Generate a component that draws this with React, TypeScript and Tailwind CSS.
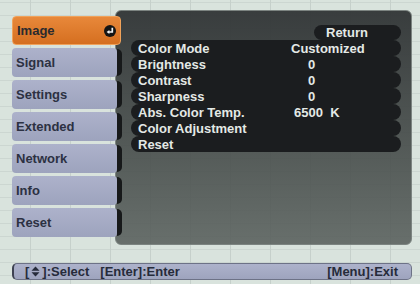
import React from 'react';

const menuItems = ['Signal', 'Settings', 'Extended', 'Network', 'Info', 'Reset'];

const rows = [
  { label: 'Color Mode', value: 'Customized', pad: 'pl-0' },
  { label: 'Brightness', value: '0', pad: 'pl-[17px]' },
  { label: 'Contrast', value: '0', pad: 'pl-[17px]' },
  { label: 'Sharpness', value: '0', pad: 'pl-[17px]' },
  { label: 'Abs. Color Temp.', value: '6500\u00a0\u00a0K', pad: 'pl-[3px]' },
  { label: 'Color Adjustment', value: '', pad: 'pl-0' },
  { label: 'Reset', value: '', pad: 'pl-0' },
];

const EnterIcon = () => (
  <svg width="12" height="12" viewBox="0 0 12 12">
    <circle cx="6" cy="6" r="6" fill="#141414" />
    <path d="M8.3 2.8 V7 H5" stroke="#f2f2f2" strokeWidth="1.7" fill="none" />
    <path d="M2.6 7 L5.4 4.9 L5.4 9.1 Z" fill="#f2f2f2" />
  </svg>
);

const UpDownIcon = () => (
  <svg width="9" height="11" viewBox="0 0 9 11">
    <path d="M4.5 0.5 L8.5 4.8 H0.5 Z" fill="#262b3a" />
    <path d="M4.5 10.5 L8.5 6.2 H0.5 Z" fill="#262b3a" />
  </svg>
);

export default function App() {
  return (
    <div
      className="w-[420px] h-[284px] overflow-hidden bg-[#d9e3dd] bg-[linear-gradient(to_right,#c6d0cb_1px,transparent_1px),linear-gradient(to_bottom,#ccd6d1_1px,transparent_1px)] bg-[size:40px_13px] bg-[position:30px_2px] text-[13px] font-bold leading-none"
      style={{ fontFamily: '"Liberation Sans", Arial, sans-serif' }}
    >
      <div className="flex pl-[12px] pt-[10px]">
        {/* left tabs */}
        <div className="relative z-10 w-[110px] mt-[6px] flex flex-col gap-[3px]">
          <div className="h-[29px] w-[109px] rounded-[4px] border border-[#f0a25a] bg-[linear-gradient(to_bottom,#e8883a,#d56f20)] flex items-center justify-between pl-[4px] pr-[4px] text-[#2a2a2e]">
            <span>Image</span>
            <EnterIcon />
          </div>
          {menuItems.map((m) => (
            <div key={m} className="flex items-center">
              <div className="h-[29px] w-[105px] rounded-[4px] bg-[linear-gradient(to_bottom,#adb2cb,#9da3bd)] flex items-center pl-[4px] text-[#2c3142]">
                {m}
              </div>
              <div className="h-[27px] w-[5px] rounded-r-[5px] bg-[#17191a]" />
            </div>
          ))}
        </div>

        {/* main panel */}
        <div className="ml-[-7px] w-[297px] h-[235px] rounded-[6px] border border-[#7c8481] bg-[linear-gradient(to_bottom,rgba(50,54,55,0.96),rgba(70,76,74,0.9)_60%,rgba(88,95,92,0.88))] pt-[14px] pl-[15px] pr-[10px] text-[#e4e9e6]">
          <div className="flex justify-end">
            <div className="h-[15px] w-[87px] rounded-full bg-[#1b1d1f] flex items-center pl-[12px]">Return</div>
          </div>
          <div className="flex flex-col">
            {rows.map((r) => (
              <div key={r.label} className="h-[16px] rounded-full bg-[#1b1d1f] flex items-center pl-[7px]">
                <span className="w-[153px]">{r.label}</span>
                <span className={r.pad}>{r.value}</span>
              </div>
            ))}
          </div>
        </div>
      </div>

      {/* bottom help bar */}
      <div className="mt-[18px] mx-[12px] w-[400px] h-[17px] rounded-[5px] border border-[#6d7287] border-l-[2px] border-l-[#3e4252] bg-[linear-gradient(to_bottom,#adb2cb,#9ea4be)] flex items-center justify-between pl-[11px] pr-[13px] text-[#262b3a]">
        <div className="flex items-center">
          <span>[</span>
          <span className="mx-[2px] flex items-center"><UpDownIcon /></span>
          <span>]:Select</span>
          <span className="ml-[11px]">[Enter]:Enter</span>
        </div>
        <span>[Menu]:Exit</span>
      </div>
    </div>
  );
}
